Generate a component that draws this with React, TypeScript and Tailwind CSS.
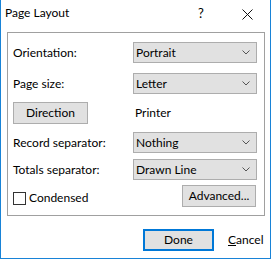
import type { ReactNode } from "react";

const font = { fontFamily: "Lato, 'Liberation Sans', sans-serif" };

function Chevron() {
  return (
    <svg width="8" height="5" viewBox="0 0 8 5" className="shrink-0">
      <polyline points="0.5,0.5 4,4 7.5,0.5" fill="none" stroke="#555" strokeWidth="1" />
    </svg>
  );
}

function Combo({ value }: { value: string }) {
  return (
    <div className="flex h-[21px] w-[124px] items-center justify-between border border-[#adadad] bg-[#e1e1e1] pl-[2px] pr-[6px] text-[12px] leading-[16px] text-black">
      <span>{value}</span>
      <Chevron />
    </div>
  );
}

function Row({ label, children, className }: { label: string; children: ReactNode; className?: string }) {
  return (
    <div className={"flex items-center " + (className ?? "")}>
      <span className="w-[120px] text-[12px] leading-[16px] text-black">{label}</span>
      {children}
    </div>
  );
}

function Button({ children, className }: { children: ReactNode; className?: string }) {
  return (
    <button
      className={
        "flex h-[22px] items-center justify-center border border-[#adadad] bg-[#e1e1e1] text-[12px] leading-[16px] text-black " +
        (className ?? "")
      }
    >
      {children}
    </button>
  );
}

export default function App() {
  return (
    <div
      style={font}
      className="flex h-[259px] w-[271px] flex-col border-x border-b border-[#1883d7] bg-white"
    >
      {/* title bar */}
      <div className="flex h-[32px] items-start">
        <span className="flex-1 pl-[4px] pt-[5px] text-[12px] leading-[16px] text-black">Page Layout</span>
        <div className="flex h-[28px] w-[46px] items-center justify-center text-[13px] text-black">?</div>
        <div className="flex h-[28px] w-[46px] items-center justify-center">
          <svg width="11" height="11" viewBox="0 0 11 11">
            <path d="M0.5 0.5 L10.5 10.5 M10.5 0.5 L0.5 10.5" stroke="#111" strokeWidth="1" />
          </svg>
        </div>
      </div>

      {/* group box */}
      <div className="ml-[6px] mr-[5px] flex h-[184px] flex-col border border-[#a0a0a0] pl-[5px] pr-[7px] pt-[9px]">
        <Row label="Orientation:">
          <Combo value="Portrait" />
        </Row>
        <Row label="Page size:" className="mt-[10px]">
          <Combo value="Letter" />
        </Row>
        <div className="mt-[8px] flex items-center">
          <Button className="w-[75px]">Direction</Button>
          <span className="ml-[47px] text-[12px] leading-[16px] text-black">Printer</span>
        </div>
        <Row label="Record separator:" className="mt-[8px]">
          <Combo value="Nothing" />
        </Row>
        <Row label="Totals separator:" className="mt-[6px]">
          <Combo value="Drawn Line" />
        </Row>
        <div className="mt-[5px] flex items-center">
          <span className="mt-[4px] h-[13px] w-[13px] border border-[#333]" />
          <span className="ml-[3px] mt-[4px] text-[12px] leading-[16px] text-black">Condensed</span>
          <Button className="ml-auto mr-[1px] w-[74px]">Advanced...</Button>
        </div>
      </div>

      {/* footer */}
      <div className="mt-[13px] flex items-center pl-[142px]">
        <button className="flex h-[22px] w-[71px] items-center justify-center border-2 border-[#0078d7] bg-[#e1e1e1] text-[12px] leading-[16px] text-black">
          Done
        </button>
        <span className="ml-[14px] text-[12px] leading-[16px] text-black">
          <span className="underline">C</span>ancel
        </span>
      </div>
    </div>
  );
}
